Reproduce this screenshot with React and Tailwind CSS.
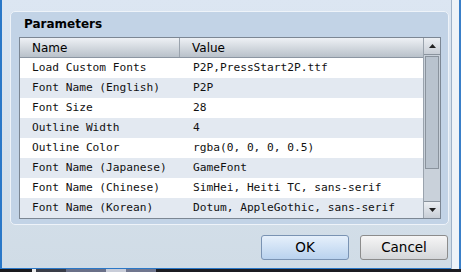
const rows = [
  ['Load Custom Fonts', 'P2P,PressStart2P.ttf'],
  ['Font Name (English)', 'P2P'],
  ['Font Size', '28'],
  ['Outline Width', '4'],
  ['Outline Color', 'rgba(0, 0, 0, 0.5)'],
  ['Font Name (Japanese)', 'GameFont'],
  ['Font Name (Chinese)', 'SimHei, Heiti TC, sans-serif'],
  ['Font Name (Korean)', 'Dotum, AppleGothic, sans-serif'],
];

function Arrow({ up }) {
  return (
    <svg width="7" height="4" viewBox="0 0 7 4">
      <path d={up ? 'M0 4 L3.5 0 L7 4 Z' : 'M0 0 L3.5 4 L7 0 Z'} fill="#222" />
    </svg>
  );
}

export default function App() {
  return (
    <div className="w-[461px] h-[272px] overflow-hidden bg-[#1c1c22] flex flex-col">
      <div className="flex h-[269px]">
        <div className="w-[451px] h-full border-l-2 border-b border-[#2a78c8] bg-gradient-to-b from-[#dce6f2] to-[#d0dce6] flex flex-col pt-[11px] pl-[8px] pr-[2px]" style={{ fontFamily: '"DejaVu Sans", sans-serif' }}>
          <div className="w-[439px] h-[214px] rounded-[5px] border border-[#eef3f9] bg-[#c2d3e6] flex flex-col px-[8px]">
            <div className="h-[25px] pl-[5px] pt-[5px] text-[12px] font-bold text-black leading-[15px]">Parameters</div>
            <div className="w-[422px] h-[182px] border border-[#7c8794] bg-white flex">
              <div className="flex-1 flex flex-col">
                <div className="h-[20px] flex border-b border-[#8c96a2] bg-gradient-to-b from-[#eef1f5] to-[#b9c1ca] text-[12px] text-black leading-[20px]">
                  <div className="w-[160px] pl-[12px] border-r border-[#9aa3ad]">Name</div>
                  <div className="pl-[12px]">Value</div>
                </div>
                {rows.map(([k, v], i) => (
                  <div
                    key={k}
                    className={`h-[20px] pt-[1px] flex items-center text-[11.2px] text-[#111] ${i % 2 ? 'bg-[#e3e9f1]' : 'bg-white'}`}
                    style={{ fontFamily: '"DejaVu Sans Mono", monospace' }}
                  >
                    <div className="w-[160px] pl-[12px] whitespace-nowrap">{k}</div>
                    <div className="pl-[13px] whitespace-nowrap">{v}</div>
                  </div>
                ))}
              </div>
              <div className="w-[17px] flex flex-col border-l border-[#9aa3ad] bg-[#c9d1da]">
                <div className="h-[17px] flex items-center justify-center border-b border-[#8a939d] bg-gradient-to-b from-[#eceff3] to-[#c8ced6]">
                  <Arrow up />
                </div>
                <div className="h-[113px] mx-[1px] mt-[1px] border border-[#8a939d] bg-[#b9c3ce]" />
                <div className="flex-1" />
                <div className="h-[17px] flex items-center justify-center border-t border-[#8a939d] bg-gradient-to-b from-[#eceff3] to-[#c8ced6]">
                  <Arrow />
                </div>
              </div>
            </div>
          </div>
          <div className="flex justify-end gap-[11px] mt-[10px] pr-[1px]">
            <button className="w-[88px] h-[25px] rounded-[3px] border border-[#7a93b3] bg-gradient-to-b from-[#e6f0fb] to-[#b9d2ee] text-[13.5px] text-black">OK</button>
            <button className="w-[88px] h-[25px] rounded-[3px] border border-[#8c8c8c] bg-gradient-to-b from-[#f6f6f6] to-[#d4d6d9] text-[13.5px] text-black">Cancel</button>
          </div>
        </div>
        <div className="flex-1 flex">
          <div className="w-[1px] bg-[#9fb2c8]" />
          <div className="flex-1 bg-[#eef3f8]" />
          <div className="w-[2px] bg-[#3a7fc8]" />
        </div>
      </div>
      <div className="flex-1 flex">
        <div className="w-[32px] bg-[#1a1a1e]" />
        <div className="w-[4px] bg-[#e8e8e8]" />
        <div className="w-[30px] bg-[#3a3d48]" />
        <div className="w-[40px] bg-[#6a7088]" />
        <div className="w-[20px] bg-[#c8ccd8]" />
        <div className="w-[30px] bg-[#70768e]" />
        <div className="flex-1 bg-[#1c1c22]" />
      </div>
    </div>
  );
}
